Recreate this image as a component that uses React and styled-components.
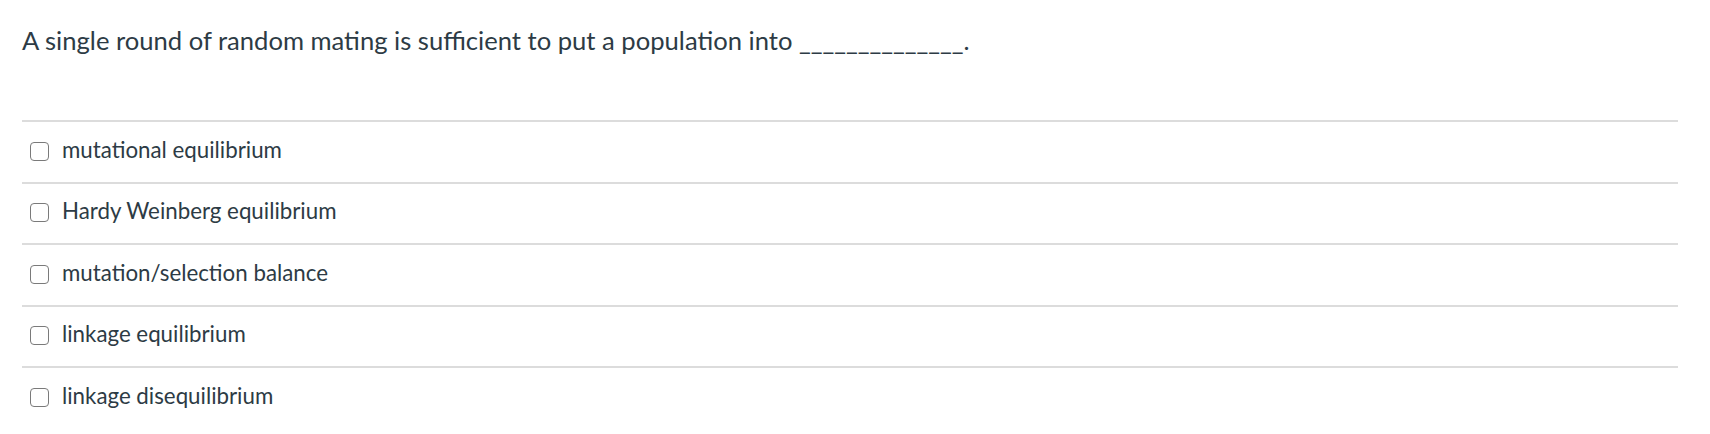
import styled, { createGlobalStyle } from "styled-components";

const GlobalStyle = createGlobalStyle`
  body {
    margin: 0;
    background: #fff;
    font-family: Lato, "Liberation Sans", sans-serif;
    color: #2d3b45;
  }
`;

const answers = [
  "mutational equilibrium",
  "Hardy Weinberg equilibrium",
  "mutation/selection balance",
  "linkage equilibrium",
  "linkage disequilibrium",
];

const Page = styled.div`
  padding: 0 32px 0 22px;
`;

const Question = styled.p`
  margin: 0;
  padding-top: 23px;
  height: 120px;
  box-sizing: border-box;
  font-size: 25.6px;
  line-height: 34px;
`;

const AnswerList = styled.div`
  display: flex;
  flex-direction: column;
`;

const Answer = styled.label`
  display: flex;
  align-items: center;
  gap: 13px;
  height: 61.5px;
  box-sizing: border-box;
  padding-left: 8px;
  padding-bottom: 5px;
  border-top: 2px solid #dcdcdc;
  font-size: 22.3px;
  cursor: pointer;
`;

const Box = styled.span`
  width: 19px;
  height: 19px;
  box-sizing: border-box;
  border: 1.5px solid #7a7a7a;
  border-radius: 4px;
  margin-top: 4px;
  flex-shrink: 0;
`;

const App = () => {
  return (
    <>
      <GlobalStyle />
      <Page>
        <Question>
          A single round of random mating is sufficient to put a population into ______________.
        </Question>
        <AnswerList>
          {answers.map((a) => (
            <Answer key={a}>
              <Box />
              {a}
            </Answer>
          ))}
        </AnswerList>
      </Page>
    </>
  );
};

export default App;
